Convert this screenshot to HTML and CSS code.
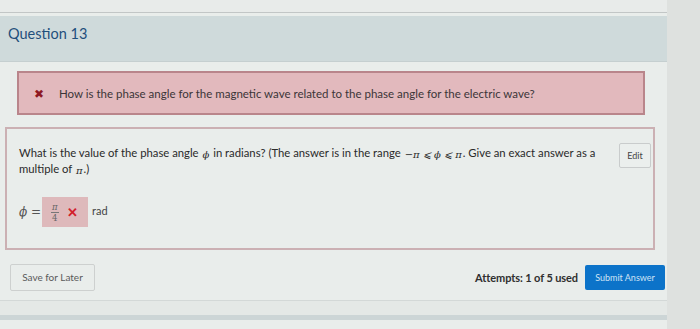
FILE: index.html
```html
<!DOCTYPE html>
<html>
<head>
<meta charset="utf-8">
<link rel="stylesheet" href="styles.css">
</head>
<body>
<div class="page">
  <div class="main">
    <div class="topstrip"></div>
    <div class="header">Question 13</div>
    <div class="feedback">
      <span class="fx">✖</span>
      <span class="ftext">How is the phase angle for the magnetic wave related to the phase angle for the electric wave?</span>
    </div>
    <div class="qbox">
      <div class="qtop">
        <div class="qtext">
          <div class="qline">What is the value of the phase angle <span class="m">ϕ</span> in radians? (The answer is in the range <span class="m">−π ⩽ ϕ ⩽ π</span>. Give an exact answer as a</div>
          <div class="qline">multiple of <span class="m">π</span>.)</div>
        </div>
        <div class="edit">Edit</div>
      </div>
      <div class="answer">
        <span class="phi">ϕ =</span>
        <span class="ansbox">
          <span class="frac"><span class="num">π</span><span class="den">4</span></span>
          <span class="wrong">✕</span>
        </span>
        <span class="unit">rad</span>
      </div>
    </div>
    <div class="actions">
      <div class="save">Save for Later</div>
      <div class="right">
        <span class="attempts">Attempts: 1 of 5 used</span>
        <div class="submit">Submit Answer</div>
      </div>
    </div>
    <div class="bottomline"></div>
  </div>
  <div class="gutter"></div>
</div>
</body>
</html>
```
FILE: styles.css
```css
html, body {
  margin: 0;
  padding: 0;
  width: 700px;
  height: 329px;
  overflow: hidden;
  background: #e4e8e6;
  font-family: Lato, "Open Sans", sans-serif;
}
.page {
  display: flex;
  height: 329px;
}
.main {
  width: 667px;
  background: #e9edeb;
  display: flex;
  flex-direction: column;
}
.gutter {
  flex: 1;
  background: #dee1df;
}
.topstrip {
  height: 12px;
  border-bottom: 1px solid #c2c6c6;
  background: #e8ebea;
}
.header {
  height: 46px;
  margin-top: 3px;
  background: #cfdadb;
  border-bottom: 1px solid #c5cfd0;
  color: #1f4f7c;
  font-size: 14.5px;
  padding-left: 8px;
  display: flex;
  align-items: center;
  padding-bottom: 10px;
  box-sizing: border-box;
}
.feedback {
  margin: 9px 22px 0 17px;
  height: 44px;
  box-sizing: border-box;
  background: #e2b9bd;
  border: 2px solid #b9858b;
  display: flex;
  align-items: center;
  padding-left: 15px;
  color: #3b3538;
  font-size: 11.5px;
}
.fx {
  color: #8e1822;
  font-size: 12px;
  width: 25px;
}
.qbox {
  margin: 12px 12px 0 5px;
  height: 123px;
  box-sizing: border-box;
  border: 2px solid #cbb0b3;
  padding: 13px 0 0 12px;
  display: flex;
  flex-direction: column;
}
.qtop {
  display: flex;
  justify-content: space-between;
}
.qtext {
  margin: 4px 0 0 0;
  width: 585px;
  font-size: 11.3px;
  color: #2a2a2a;
  display: flex;
  flex-direction: column;
  gap: 2px;
}
.qline {
  height: 14px;
  line-height: 14px;
  white-space: nowrap;
}
.m {
  font-family: "DejaVu Serif", "Liberation Serif", serif;
  font-style: italic;
  font-size: 10px;
  display: inline-block;
  line-height: 12px;
  height: 12px;
  vertical-align: -1px;
  padding: 0 1px;
}
.edit {
  width: 32px;
  height: 25px;
  box-sizing: border-box;
  border: 1px solid #c9cccc;
  border-radius: 2px;
  margin: 1px 2px 0 0;
  font-size: 9px;
  color: #444;
  display: flex;
  align-items: center;
  justify-content: center;
  background: #ebefed;
  flex-shrink: 0;
}
.answer {
  display: flex;
  align-items: center;
  margin-top: 21px;
  height: 30px;
}
.phi {
  font-family: "DejaVu Serif", serif;
  font-style: italic;
  font-size: 12px;
  color: #555;
  width: 23px;
}
.ansbox {
  width: 46px;
  height: 30px;
  background: #deb9bb;
  display: flex;
  align-items: center;
  padding-left: 9px;
  box-sizing: border-box;
}
.frac {
  display: flex;
  flex-direction: column;
  align-items: center;
  font-family: "DejaVu Serif", serif;
  font-size: 8.5px;
  line-height: 10px;
  color: #666;
}
.num { font-style: italic; border-bottom: 1px solid #777; padding: 0 1px; }
.wrong {
  color: #d21f2c;
  font-size: 13px;
  font-weight: bold;
  margin-left: 8px;
}
.unit {
  font-size: 11px;
  color: #444;
  margin-left: 4px;
  margin-bottom: 4px;
}
.actions {
  display: flex;
  justify-content: space-between;
  align-items: center;
  padding: 0 2px 0 10px;
  margin-top: 12px;
  height: 30px;
}
.save {
  width: 85px;
  height: 27px;
  box-sizing: border-box;
  border: 1px solid #cdd0cf;
  border-radius: 2px;
  font-size: 10px;
  color: #5a5a5a;
  display: flex;
  align-items: center;
  justify-content: center;
}
.right {
  display: flex;
  align-items: center;
  gap: 7px;
}
.attempts {
  font-size: 11px;
  font-weight: bold;
  color: #2f2f2f;
  letter-spacing: -0.1px;
}
.submit {
  width: 80px;
  height: 25px;
  background: #0c73c9;
  border-radius: 2px;
  color: #cfe3f5;
  font-size: 9px;
  display: flex;
  align-items: center;
  justify-content: center;
}
.bottomline {
  margin-top: 8px;
  border-top: 1px solid #d3d8d7;
  height: 14px;
  background: #e4e8e6;
  border-bottom: 5px solid #ccd5d6;
}
```
